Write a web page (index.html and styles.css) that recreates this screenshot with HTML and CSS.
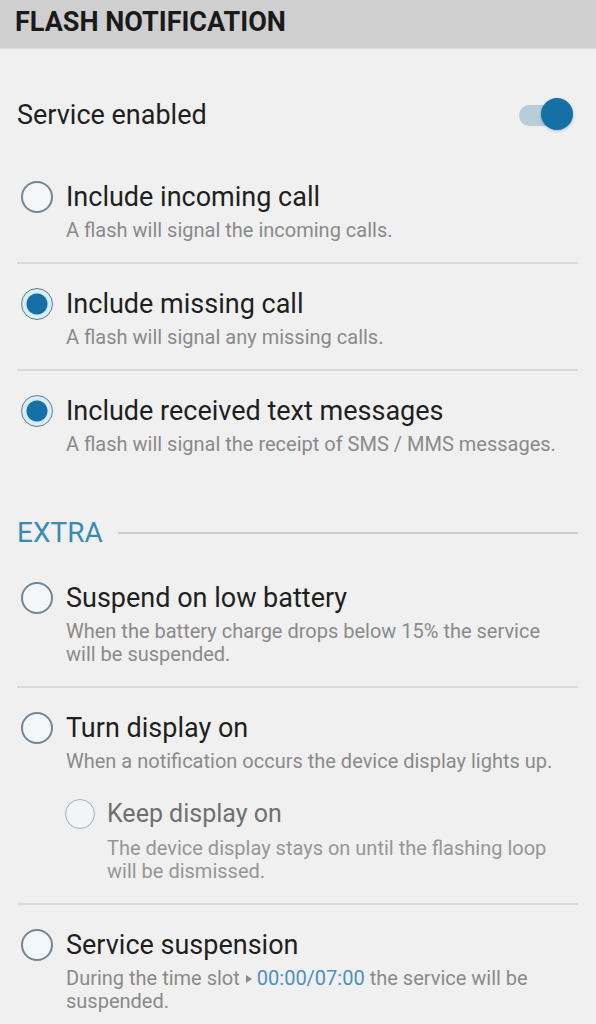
FILE: index.html
```html
<!DOCTYPE html>
<html>
<head>
<meta charset="utf-8">
<link rel="stylesheet" href="styles.css">
</head>
<body>
<div class="header">FLASH NOTIFICATION</div>

<div class="service">
  <span class="service-label">Service enabled</span>
  <span class="toggle"><span class="track"></span><span class="thumb"></span></span>
</div>

<div class="item">
  <span class="radio"></span>
  <div class="body">
    <div class="title">Include incoming call</div>
    <div class="sub">A flash will signal the incoming calls.</div>
  </div>
</div>

<div class="item">
  <span class="radio on"></span>
  <div class="body">
    <div class="title">Include missing call</div>
    <div class="sub">A flash will signal any missing calls.</div>
  </div>
</div>

<div class="item last">
  <span class="radio on"></span>
  <div class="body">
    <div class="title">Include received text messages</div>
    <div class="sub">A flash will signal the receipt of SMS / MMS messages.</div>
  </div>
</div>

<div class="section">
  <span class="section-label">EXTRA</span>
  <span class="section-line"></span>
</div>

<div class="item">
  <span class="radio"></span>
  <div class="body">
    <div class="title">Suspend on low battery</div>
    <div class="sub">When the battery charge drops below 15% the service will be suspended.</div>
  </div>
</div>

<div class="item">
  <span class="radio"></span>
  <div class="body">
    <div class="title">Turn display on</div>
    <div class="sub">When a notification occurs the device display lights up.</div>
    <div class="nested">
      <span class="radio small"></span>
      <div class="body nbody">
        <div class="title dim">Keep display on</div>
        <div class="sub dim">The device display stays on until the flashing loop will be dismissed.</div>
      </div>
    </div>
  </div>
</div>

<div class="item last">
  <span class="radio"></span>
  <div class="body">
    <div class="title">Service suspension</div>
    <div class="sub"><div class="sub-line"><span>During the time slot</span><span class="arrow"></span><span class="time">00:00/07:00</span><span>the service will be</span></div><div class="sub-line">suspended.</div></div>
  </div>
</div>
</body>
</html>
```

FILE: styles.css
```css
html, body {
  margin: 0;
  padding: 0;
}
body {
  background: #f0f0f0;
  font-family: Roboto, "Noto Sans", sans-serif;
  color: #1f1f1f;
  width: 596px;
  overflow: hidden;
}
.header {
  height: 49px;
  background: #cfcfcf;
  border-bottom: 1px solid #dedede;
  box-sizing: border-box;
  padding-left: 15px;
  font-weight: bold;
  font-size: 27px;
  line-height: 45px;
  color: #1a1a1a;
}
.service {
  display: flex;
  align-items: center;
  justify-content: space-between;
  padding: 51px 0 27px 17px;
  height: 30px;
}
.service-label {
  font-size: 27px;
  line-height: 30px;
}
.toggle {
  position: relative;
  width: 64px;
  height: 32px;
  margin-right: 23px;
}
.track {
  position: absolute;
  left: 10px;
  top: 6px;
  width: 42px;
  height: 21px;
  border-radius: 11px;
  background: #b7cdd8;
}
.thumb {
  position: absolute;
  right: 0;
  top: -1px;
  width: 32px;
  height: 32px;
  border-radius: 50%;
  background: #1570a6;
  box-shadow: 0 1px 3px rgba(20, 90, 140, 0.35);
}
.item {
  display: flex;
  align-items: flex-start;
  margin: 0 18px 0 17px;
  padding: 25px 0 20px 4px;
  border-bottom: 2px solid #dadada;
}
.item.last {
  border-bottom: none;
}
.radio {
  flex: none;
  box-sizing: border-box;
  width: 32px;
  height: 32px;
  margin-top: -1px;
  border-radius: 50%;
  border: 2px solid #748490;
  background: #f4f7f9;
}
.radio.on {
  border: 1.5px solid #66788a;
  background: radial-gradient(circle, #1570a8 0, #1570a8 10px, #d9edf9 11px);
}
.radio.small {
  width: 30px;
  height: 30px;
  margin-top: 0;
  border-color: #a6aeb5;
  border-width: 1.5px;
  background: #f2f4f5;
}
.body {
  margin-left: 13px;
  min-width: 0;
  max-width: 494px;
}
.nested .nbody {
  max-width: 454px;
}
.title {
  font-size: 27px;
  line-height: 30px;
  color: #1f1f1f;
  white-space: nowrap;
}
.sub {
  margin-top: 7px;
  font-size: 20px;
  line-height: 23px;
  color: #8a8a8a;
}
.sub-line {
  display: flex;
  align-items: center;
  gap: 5px;
  white-space: nowrap;
}
.nested {
  display: flex;
  align-items: flex-start;
  margin: 26px 0 0 -1px;
}
.nbody {
  margin-left: 12px;
}
.title.dim {
  font-size: 25px;
  color: #707070;
}
.sub.dim {
  color: #969696;
  margin-top: 8px;
}
.arrow {
  display: inline-block;
  width: 0;
  height: 0;
  border-top: 4px solid transparent;
  border-bottom: 4px solid transparent;
  border-left: 6px solid #8a8a8a;
  margin: 1px 0 0 1px;
}
.time {
  color: #4f8fc0;
}
.section {
  display: flex;
  align-items: center;
  padding: 42px 18px 10px 17px;
}
.section-label {
  font-size: 28px;
  line-height: 30px;
  color: #3b8ab3;
}
.section-line {
  flex: 1;
  height: 2px;
  margin-left: 15px;
  background: #c9ced2;
}
```
